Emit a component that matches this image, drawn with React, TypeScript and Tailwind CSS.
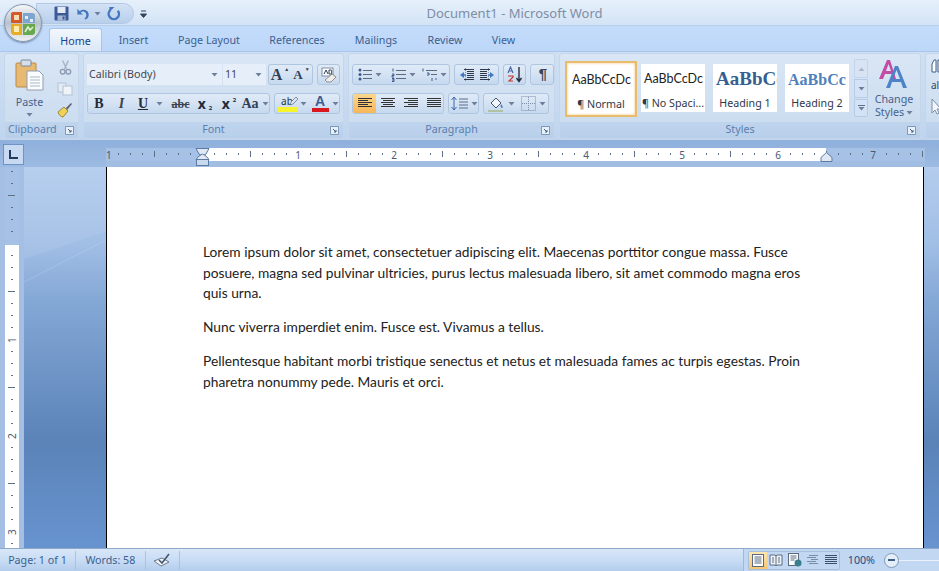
import type { ReactNode } from "react";

const UI = "font-['Noto_Sans','Open_Sans',sans-serif]";

function Caret({ className = "" }: { className?: string }) {
  return (
    <svg width="7" height="4" viewBox="0 0 7 4" className={`shrink-0 ${className}`}>
      <path d="M0.5 0h6L3.5 3.5z" fill="#6d7f9b" />
    </svg>
  );
}

function OfficeButton() {
  return (
    <div className="absolute left-[4px] top-[4px] z-20 h-[38px] w-[38px] rounded-full border border-[#8397b0] bg-gradient-to-b from-[#f7f8f8] via-[#b9c3ce] to-[#eef1f4] shadow-[0_1px_2px_rgba(60,80,110,0.6)]">
      <svg width="36" height="36" viewBox="0 0 36 36">
        <path d="M6 9q0-2 2-2h9v11H6z" fill="#d6592a" />
        <rect x="9" y="10" width="5" height="5" fill="#f7dcb4" />
        <path d="M18 8h9q3 0 3 2v8H18z" fill="#7da6cf" />
        <rect x="20" y="11" width="3" height="3" fill="#e3edf6" />
        <rect x="25" y="14" width="3" height="3" fill="#e3edf6" />
        <path d="M6 19h11v11H9q-3 0-3-3z" fill="#e7ad24" />
        <rect x="9" y="21" width="5" height="6" fill="#fbeeae" />
        <path d="M18 19h12v8q0 3-3 3h-9z" fill="#67a851" />
        <path d="M20 27l3-5 2 3 3-3" stroke="#e4f2d6" strokeWidth="1.5" fill="none" />
      </svg>
    </div>
  );
}

function QuickAccess() {
  return (
    <div className="absolute left-[36px] top-[3px] z-10 flex h-[21px] w-[98px] items-center rounded-r-full border border-[#b3c9e3] bg-gradient-to-b from-[#d3e2f5] to-[#b8cfec] pl-[17px]">
      <svg width="15" height="15" viewBox="0 0 15 15">
        <rect x="0.500" y="0.500" width="14" height="14" rx="1" fill="#3c5a9a" />
        <rect x="3.500" y="1" width="8" height="6" fill="#e4ebf6" />
        <rect x="3.500" y="9.500" width="8" height="5" fill="#a8b7d2" />
        <rect x="8.500" y="10.500" width="2" height="3" fill="#3c5a9a" />
      </svg>
      <svg width="14" height="14" viewBox="0 0 15 15" className="ml-[7px]">
        <path d="M1.500 2v6h6L5 5.800C7 4 10.500 4.500 11 8c.3 2-.8 3.600-2.200 4.600l1.600.9C13 12 14.200 9.500 13.400 6.600 12.300 2.800 7.500 1.600 4 4.500z" fill="#4478bd" />
      </svg>
      <Caret className="ml-[4px]" />
      <svg width="15" height="15" viewBox="0 0 16 16" className="ml-[6px]">
        <path d="M3.500 4.500a5.500 5.500 0 1 0 8 .5" fill="none" stroke="#4478bd" strokeWidth="2.600" />
        <path d="M8 1h-5.500v5.500z" fill="#4478bd" />
      </svg>
      <svg width="7" height="8" viewBox="0 0 7 8" className="absolute left-[103px]">
        <path d="M1 1h5M0.500 4h6L3.500 7.500z" stroke="#33465f" strokeWidth="1" fill="#33465f" />
      </svg>
    </div>
  );
}

function Tab({ label, active, w }: { label: string; active?: boolean; w: number }) {
  return (
    <div
      className={`flex h-[23px] items-center justify-center pt-[2px] text-[10.7px] ${
        active
          ? "rounded-t-[3px] border border-b-0 border-[#a9c5e8] bg-gradient-to-b from-[#f2f7fd] to-[#dbe8f7] text-[#15428b]"
          : "text-[#3c5f90]"
      }`}
      style={{ width: w }}
    >
      {label}
    </div>
  );
}

function Group({ label, width, children, launcher = true, labelClass = "justify-center" }: { label: string; width: number; children: ReactNode; launcher?: boolean; labelClass?: string }) {
  return (
    <div
      className="flex h-[86px] shrink-0 flex-col overflow-hidden rounded-[3px] border border-[#c5d6ea] bg-gradient-to-b from-[#d9e6f5] to-[#c9dbef]"
      style={{ width }}
    >
      <div className="h-[68px] shrink-0">{children}</div>
      <div className={`relative flex h-[16px] shrink-0 items-center bg-gradient-to-b from-[#bfd4ed] to-[#b8cfeb] pb-[2px] text-[10.7px] leading-none text-[#5a7fae] ${labelClass}`}>
        {label}
        {launcher && (
          <svg width="9" height="9" viewBox="0 0 9 9" className="absolute right-[4px] top-[4px]">
            <path d="M0.500 8.500v-8h8v8z" fill="#e7eff9" stroke="#7e98b9" />
            <path d="M3 3l3 3M6 4v2H4" stroke="#3f5f86" fill="none" />
          </svg>
        )}
      </div>
    </div>
  );
}

function BtnGroup({ width, children, className = "" }: { width: number; children: ReactNode; className?: string }) {
  return (
    <div
      className={`flex h-[21px] shrink-0 items-center overflow-hidden rounded-[3px] border border-[#afc5e0] bg-gradient-to-b from-[#e0ebf7] via-[#d4e2f3] to-[#c6d9ef] ${className}`}
      style={{ width }}
    >
      {children}
    </div>
  );
}

function Cell({ w, children, className = "" }: { w: number; children?: ReactNode; className?: string }) {
  return (
    <div className={`flex h-full shrink-0 items-center justify-center gap-[3px] ${className}`} style={{ width: w }}>
      {children}
    </div>
  );
}

function Lines({ rows, color = "#39506f" }: { rows: [number, number][]; color?: string }) {
  return (
    <svg width="14" height="13" viewBox="0 0 14 13">
      {rows.map(([x, w], i) => (
        <rect key={i} x={x} y={1 + i * 2} width={w} height="1" fill={color} />
      ))}
    </svg>
  );
}

function BulletsIcon() {
  return (
    <svg width="14" height="13" viewBox="0 0 14 13">
      <circle cx="2" cy="2" r="1.500" fill="#3c5a8c" />
      <circle cx="2" cy="6.500" r="1.500" fill="#3c5a8c" />
      <circle cx="2" cy="11" r="1.500" fill="#3c5a8c" />
      <path d="M5 2.500h9M5 6.500h9M5 10.500h9" stroke="#5b6a80" />
    </svg>
  );
}

function NumberingIcon() {
  return (
    <svg width="15" height="14" viewBox="0 0 15 14">
      <path d="M2 0.500v3M1 6h2v1.500H1V9h2M1 10.500h2v3H1M1 12h2" stroke="#3c5a8c" fill="none" />
      <path d="M5 2.500h10M5 6.500h10M5 10.500h10" stroke="#5b6a80" />
    </svg>
  );
}

function MultilevelIcon() {
  return (
    <svg width="15" height="14" viewBox="0 0 15 14">
      <path d="M1 0.500v3M5 5h2v2H5M10 10v3" stroke="#3c5a8c" fill="none" />
      <path d="M4 2.500h11M9 6.500h6M13 11h2" stroke="#5b6a80" />
    </svg>
  );
}

function IndentIcon({ flip }: { flip?: boolean }) {
  return (
    <svg width="16" height="14" viewBox="0 0 16 14" className={flip ? "-scale-x-100" : ""}>
      <path d="M2 7l4-3v6z" fill="#3d79c2" />
      <path d="M5 7h3" stroke="#3d79c2" strokeWidth="1.500" />
      <path d="M6 1.500h10M9 3.500h7M9 5.500h7M9 7.500h7M9 9.500h7M6 11.500h10" stroke="#2f3a4a" />
      <path d="M7.500 0v14" stroke="#8090a8" strokeDasharray="1 1" />
    </svg>
  );
}

function ClipboardGroup() {
  return (
    <div className="flex h-full">
      <div className="flex w-[47px] flex-col items-center pl-[2px] pt-[5px] text-[10.7px] leading-none text-[#45628c]">
        <svg width="30" height="32" viewBox="0 0 30 32">
          <rect x="1" y="4" width="20" height="24" rx="1" fill="#e8b971" stroke="#b98a4b" />
          <rect x="6" y="1" width="10" height="6" rx="1" fill="#d5dee9" stroke="#7f8a98" />
          <path d="M12 12h12l4 4v15H12z" fill="#fbfcfe" stroke="#8f9db0" />
          <path d="M15 18h10M15 21h10M15 24h10M15 27h10" stroke="#a9b7c9" />
        </svg>
        <span className="mt-[6px]">Paste</span>
        <Caret className="mt-[5px]" />
      </div>
      <div className="flex flex-1 flex-col items-center gap-[6px] pt-[5px]">
        <svg width="15" height="17" viewBox="0 0 16 17">
          <path d="M5 1l4 9M11 1L7 10" stroke="#a8b5c8" strokeWidth="1.500" />
          <circle cx="5" cy="13" r="2.500" fill="none" stroke="#8b9cb4" strokeWidth="1.500" />
          <circle cx="11" cy="13" r="2.500" fill="none" stroke="#8b9cb4" strokeWidth="1.500" />
        </svg>
        <svg width="16" height="14" viewBox="0 0 16 14">
          <rect x="1" y="1" width="8" height="9" fill="#e3ebf5" stroke="#b4c1d2" />
          <rect x="6" y="4" width="9" height="9" fill="#eef3f8" stroke="#b4c1d2" />
        </svg>
        <svg width="16" height="16" viewBox="0 0 16 16">
          <path d="M1 10l6-5 4 4-5 6c-2 0-4-2-5-5z" fill="#f0d25a" stroke="#9d8a35" />
          <path d="M9 6l5-5 1 1-5 6z" fill="#5b5f6b" />
        </svg>
      </div>
    </div>
  );
}

function FontGroup() {
  return (
    <div className="flex flex-col gap-[8px] pl-[3px] pt-[10px]">
      <div className="flex">
        <div className="flex h-[21px] w-[135px] items-center justify-between bg-[#e6eff9] pl-[2px] pr-[4px] text-[10.7px] text-[#3f4754]">
          Calibri (Body)
          <Caret />
        </div>
        <div className="ml-px flex h-[21px] w-[43px] items-center justify-between bg-[#e6eff9] pl-[2px] pr-[4px] text-[10.7px] text-[#3f4754]">
          11
          <Caret />
        </div>
        <BtnGroup width={45} className="ml-[2px]">
          <Cell w={22} className="gap-0 font-['Liberation_Serif',serif] text-[16px] font-bold text-[#2f4057]">A<span className="-ml-px -mt-[9px] text-[5px]">▲</span></Cell>
          <Cell w={21} className="gap-0 font-['Liberation_Serif',serif] text-[13px] font-bold text-[#2f4057]">A<span className="-ml-px -mt-[9px] text-[5px]">▼</span></Cell>
        </BtnGroup>
        <BtnGroup width={23} className="ml-[4px]">
          <Cell w={23}>
            <svg width="17" height="16" viewBox="0 0 17 16">
              <rect x="1" y="1" width="11" height="8" fill="#fff" stroke="#7c8da5" />
              <path d="M4 13l7-6 4 3-5 5H6z" fill="#f1ece4" stroke="#8a8f99" />
              <path d="M3 7l2-4 2 4M8 3h2c1 0 1 2 0 2 1 0 1 2 0 2H8z" fill="none" stroke="#2d3e57" />
            </svg>
          </Cell>
        </BtnGroup>
      </div>
      <div className="flex">
        <BtnGroup width={183}>
          <Cell w={22} className="font-['Liberation_Serif',serif] text-[14px] font-bold text-[#252b36]">B</Cell>
          <Cell w={23} className="font-['Liberation_Serif',serif] text-[14px] font-bold italic text-[#3b4350]">I</Cell>
          <Cell w={35} className="font-['Liberation_Serif',serif] text-[14px] font-bold text-[#252b36] underline">U<Caret className="ml-[5px]" /></Cell>
          <Cell w={25} className="font-['Liberation_Serif',serif] text-[12px] font-bold text-[#3b4350] line-through">abc</Cell>
          <Cell w={24} className="gap-0 text-[14px] font-bold text-[#252b36]">x<span className="mt-[9px] text-[6px]">2</span></Cell>
          <Cell w={24} className="gap-0 text-[14px] font-bold text-[#252b36]">x<span className="-mt-[7px] text-[6px]">2</span></Cell>
          <Cell w={28} className="gap-[1px] font-['Liberation_Serif',serif] text-[14px] font-bold text-[#2f4057]">Aa<Caret /></Cell>
        </BtnGroup>
        <BtnGroup width={66} className="ml-[4px]">
          <Cell w={34}>
            <div className="relative flex h-full flex-col items-center justify-center">
              <span className="h-[11px] text-[10px] leading-[10px] text-[#253448]">ab</span>
              <span className="h-[5px] w-[19px] bg-[#f7f32c]" />
              <svg width="9" height="9" viewBox="0 0 9 9" className="absolute right-[-2px] top-[3px]">
                <path d="M0 8l1-3 5-5 2 2-5 5z" fill="#dbe3ee" stroke="#5f6f88" strokeWidth="0.700" />
              </svg>
            </div>
            <Caret />
          </Cell>
          <Cell w={32}>
            <div className="flex h-full flex-col items-center justify-center">
              <span className="h-[13px] font-['Liberation_Sans',sans-serif] text-[14px] font-bold leading-[13px] text-[#3c5f90]">A</span>
              <span className="h-[4px] w-[17px] bg-[#d9171e]" />
            </div>
            <Caret />
          </Cell>
        </BtnGroup>
      </div>
    </div>
  );
}

function ParagraphGroup() {
  return (
    <div className="flex flex-col gap-[8px] pl-[3px] pt-[10px]">
      <div className="flex">
        <BtnGroup width={98}>
          <Cell w={34}><BulletsIcon /><Caret /></Cell>
          <Cell w={33}><NumberingIcon /><Caret /></Cell>
          <Cell w={29} className="gap-[1px]"><MultilevelIcon /><Caret /></Cell>
        </BtnGroup>
        <BtnGroup width={45} className="ml-[4px]">
          <Cell w={22}><IndentIcon /></Cell>
          <Cell w={22}><IndentIcon flip /></Cell>
        </BtnGroup>
        <BtnGroup width={23} className="ml-[4px]">
          <Cell w={23}>
            <svg width="17" height="17" viewBox="0 0 17 17">
              <path d="M1 7l2.500-6L6 7M2 5h3" fill="none" stroke="#4a69a8" strokeWidth="1.200" />
              <path d="M1 10h5v1l-4 4h4" fill="none" stroke="#c0392b" strokeWidth="1.200" />
              <path d="M12 1v14M9.500 12l2.500 3.500 2.500-3.500" fill="none" stroke="#24303f" strokeWidth="1.400" />
            </svg>
          </Cell>
        </BtnGroup>
        <BtnGroup width={24} className="ml-[4px]">
          <Cell w={24} className="font-['Liberation_Sans',sans-serif] text-[15px] font-bold text-[#3a4453]">¶</Cell>
        </BtnGroup>
      </div>
      <div className="flex">
        <BtnGroup width={92}>
          <Cell w={23} className="bg-gradient-to-b from-[#fbd78c] to-[#f7b65a]"><Lines rows={[[0, 14], [0, 10], [0, 14], [0, 10], [0, 14]]} color="#333" /></Cell>
          <Cell w={23}><Lines rows={[[0, 14], [2, 10], [0, 14], [2, 10], [0, 14]]} color="#333" /></Cell>
          <Cell w={23}><Lines rows={[[0, 14], [4, 10], [0, 14], [4, 10], [0, 14]]} color="#333" /></Cell>
          <Cell w={23}><Lines rows={[[0, 14], [0, 14], [0, 14], [0, 14], [0, 14]]} color="#333" /></Cell>
        </BtnGroup>
        <BtnGroup width={31} className="ml-[4px]">
          <Cell w={31}>
            <svg width="17" height="15" viewBox="0 0 17 15">
              <path d="M3 1v13M0.500 4L3 1l2.500 3M0.500 11L3 14l2.500-3" fill="none" stroke="#3a68ad" />
              <path d="M8 3h9M8 6h9M8 9h9M8 12h9" stroke="#5c6f8d" />
            </svg>
            <Caret />
          </Cell>
        </BtnGroup>
        <BtnGroup width={66} className="ml-[4px]">
          <Cell w={33}>
            <svg width="18" height="16" viewBox="0 0 18 16">
              <path d="M4 7l5-5 5 5-5 5z" fill="#f2f5f9" stroke="#47566d" />
              <path d="M14 8c2 2 2 4 1 4s-2-2-1-4z" fill="#3e79bd" />
              <rect x="1" y="14" width="15" height="2" fill="#b2c1a0" />
            </svg>
            <Caret />
          </Cell>
          <Cell w={33}>
            <svg width="15" height="15" viewBox="0 0 15 15">
              <rect x="0.500" y="0.500" width="14" height="14" fill="none" stroke="#7f90a8" strokeDasharray="1 1" />
              <path d="M7.500 1v13M1 7.500h13" stroke="#7f90a8" strokeDasharray="1 1" />
            </svg>
            <Caret />
          </Cell>
        </BtnGroup>
      </div>
    </div>
  );
}

function StyleCard({ sample, label, sampleClass, width = 64 }: { sample: string; label: string; sampleClass: string; width?: number }) {
  return (
    <div className="flex h-[48px] shrink-0 flex-col items-center overflow-hidden bg-white" style={{ width }}>
      <div className={`flex h-[31px] w-full items-center justify-start overflow-hidden whitespace-nowrap pl-[3px] ${sampleClass}`}>{sample}</div>
      <div className="whitespace-nowrap pt-px text-[10.7px] leading-[14px] text-[#30384a]">{label}</div>
    </div>
  );
}

function StylesGroup() {
  return (
    <div className="flex h-full">
      <div className="flex w-[294px] items-start gap-[8px] pl-[5px] pt-[7px]">
        <div className="shrink-0 border-[2px] border-[#e9bb6c] bg-white p-[2px] shadow-[inset_0_0_3px_#f3c97a]">
          <StyleCard width={64} sample="AaBbCcDc" label="¶ Normal" sampleClass="font-['Lato',sans-serif] text-[12.5px] text-[#222]" />
        </div>
        <div className="-ml-[4px] pt-[3px]">
          <StyleCard sample="AaBbCcDc" label="¶ No Spaci..." sampleClass="font-['Lato',sans-serif] text-[12.5px] text-[#222]" />
        </div>
        <div className="pt-[3px]">
          <StyleCard sample="AaBbCc" label="Heading 1" sampleClass="font-['Liberation_Serif',serif] text-[19px] font-bold text-[#365f91]" />
        </div>
        <div className="pt-[3px]">
          <StyleCard sample="AaBbCc" label="Heading 2" sampleClass="font-['Liberation_Serif',serif] text-[16px] font-bold text-[#4f81bd]" />
        </div>
      </div>
      <div className="mt-[5px] flex h-[58px] w-[14px] shrink-0 flex-col gap-[1px]">
        <div className="flex h-[19px] items-center justify-center rounded-t-[2px] border border-[#c3d5ea] bg-[#d8e4f3]"><svg width="7" height="4" viewBox="0 0 7 4"><path d="M0.500 4h6L3.500 0.500z" fill="#a9b9ce" /></svg></div>
        <div className="flex h-[19px] items-center justify-center border border-[#b6cbe6] bg-[#d3e2f5]"><Caret /></div>
        <div className="flex h-[18px] flex-col items-center justify-center gap-[1px] rounded-b-[2px] border border-[#b6cbe6] bg-[#d3e2f5]"><span className="h-px w-[7px] bg-[#5c6f8d]" /><Caret /></div>
      </div>
      <div className="flex flex-1 flex-col items-center pt-[5px] text-center text-[10.7px] leading-[13px] text-[#45628c]">
        <svg width="32" height="31" viewBox="0 0 32 31">
          <path d="M1 20L9 1h3l6 19h-3l-1.500-5H7l-2 5zM8 12h5L10.500 5z" fill="#c24ca4" fillRule="evenodd" />
          <path d="M8 29L17 7h3l9 22h-4l-2-6h-9l-2 6zM15 20h7l-3.500-9z" fill="#4d83c7" fillRule="evenodd" />
        </svg>
        <span className="mt-[3px]">Change</span>
        <span className="flex items-center gap-[2px]">Styles<Caret /></span>
      </div>
    </div>
  );
}

function HorizontalRuler() {
  const marks = [];
  for (let x = 106; x < 925; x += 12) {
    if ((x - 202) % 96 === 0) continue;
    const big = (x - 202) % 48 === 0;
    marks.push(<rect key={x} x={x - 106} y={big ? 3 : 5} width="1" height={big ? 6 : 2} fill="#5f6f86" />);
  }
  const nums = [[0, "1"], [298, "1"], [394, "2"], [490, "3"], [586, "4"], [682, "5"], [778, "6"], [873, "7"]] as [number, string][];
  return (
    <svg width="819" height="19" viewBox="0 0 819 19" className="shrink-0">
      <rect width="819" height="13" fill="#a6c1e6" />
      <rect x="97" width="623" height="13" fill="#fff" />
      <rect y="13" width="819" height="6" fill="#a2bde2" />
      {marks}
      {nums.map(([x, n], i) => (
        <text key={i} x={i === 0 ? 0 : x - 106} y="10.500" textAnchor={i === 0 ? "start" : "middle"} fontFamily="Noto Sans" fontSize="10" fill="#4a5a72">{n}</text>
      ))}
      <path d="M90 0.500h13l-3 5.500-3.500 2-3.500-2z" fill="#dfe8f4" stroke="#5c7ba3" />
      <path d="M93 8l3.500-2 3.500 2 3 3.500H90z" fill="#dfe8f4" stroke="#5c7ba3" />
      <rect x="90.500" y="11.500" width="12" height="6" fill="#c9d9ed" stroke="#5c7ba3" />
      <path d="M715 13.500v-4l5.500-5 5.500 5v4z" fill="#dfe8f4" stroke="#5c7ba3" />
    </svg>
  );
}

function VerticalRuler() {
  const marks = [];
  for (let y = 0; y < 381; y += 12) {
    if ((y - 72) % 96 === 0) continue;
    const big = (y - 24) % 96 === 0;
    marks.push(<rect key={y} x={big ? 3 : 6} y={y + 4} width={big ? 7 : 2} height="1" fill="#5f6f86" />);
  }
  return (
    <svg width="14" height="381" viewBox="0 0 14 381">
      <rect width="14" height="78" fill="#a6c1e6" />
      <rect y="78" width="14" height="303" fill="#fff" />
      {marks}
      {[[173, "1"], [269, "2"], [365, "3"]].map(([y, n]) => (
        <text key={n as string} x="7" y={y as number} dy="3.500" textAnchor="middle" fontFamily="Noto Sans" fontSize="10" fill="#4a5a72" transform={`rotate(-90 7 ${y})`}>{n}</text>
      ))}
    </svg>
  );
}

function StatusItem({ children, w }: { children: ReactNode; w: number }) {
  return (
    <div className="flex h-[19px] items-center justify-center border-r border-[#a9c2e0] text-[10.7px] text-[#3e5f8e]" style={{ width: w }}>
      {children}
    </div>
  );
}

export default function App() {
  return (
    <div className={`flex h-[571px] w-[939px] flex-col overflow-hidden bg-[#bfdbff] ${UI}`}>
      <OfficeButton />
      <QuickAccess />

      {/* Title bar */}
      <div className="flex h-[26px] shrink-0 items-center justify-center border-b border-[#b7cfea] bg-gradient-to-b from-[#e6f0fb] to-[#d3e3f6] pl-[90px] pt-[3px] text-[13px] text-[#7f8ea3]">
        Document1 - Microsoft Word
      </div>

      {/* Tabs */}
      <div className="flex h-[26px] shrink-0 items-end border-b border-[#a9c5e8] bg-gradient-to-b from-[#c4dcfb] to-[#bdd7f9] pl-[49px]">
        <Tab label="Home" active w={53} />
        <Tab label="Insert" w={63} />
        <Tab label="Page Layout" w={88} />
        <Tab label="References" w={88} />
        <Tab label="Mailings" w={70} />
        <Tab label="Review" w={68} />
        <Tab label="View" w={49} />
      </div>

      {/* Ribbon */}
      <div className="flex h-[89px] shrink-0 gap-[4px] border-b border-[#94b2d8] bg-gradient-to-b from-[#cfe0f4] to-[#bfd5ef] pl-[4px] pt-[1px]">
        <Group label="Clipboard" width={75} labelClass="justify-start pl-[3px]"><ClipboardGroup /></Group>
        <Group label="Font" width={261}><FontGroup /></Group>
        <Group label="Paragraph" width={207}><ParagraphGroup /></Group>
        <Group label="Styles" width={362}><StylesGroup /></Group>
        <Group label="" width={40} launcher={false}>
          <div className="flex flex-col items-start pl-[5px] pt-[5px]">
            <svg width="10" height="14" viewBox="0 0 10 14">
              <path d="M1 13V5l2-4h2v12zM7 1h2v12H7z" fill="#fff" stroke="#3f5f86" />
            </svg>
            <span className="mt-[7px] text-[10px] leading-[10px] text-[#33465f]">al</span>
            <svg width="10" height="16" viewBox="0 0 10 16" className="mt-[9px]">
              <path d="M1 0v14l3-3 2 4 2-1-2-4h4z" fill="#f3f6fa" stroke="#7d8ea6" />
            </svg>
          </div>
        </Group>
      </div>

      {/* Ruler row */}
      <div className="flex h-[26px] shrink-0 bg-gradient-to-b from-[#8fb0dc] to-[#9dbbe2]">
        <div className="ml-[3px] mt-[3px] flex h-[21px] w-[21px] items-center justify-center border border-[#6f93c4] bg-[#c8daf2]">
          <span className="h-[9px] w-[9px] border-b-[2px] border-l-[2px] border-[#233a5c]" />
        </div>
        <div className="ml-[82px] mt-[7px]"><HorizontalRuler /></div>
      </div>

      {/* Document area */}
      <div className="flex min-h-0 flex-1">
        <div className="flex w-[24px] shrink-0 bg-[#a5bfe4] pl-[5px]">
          <VerticalRuler />
        </div>
        <div className="relative w-[82px] shrink-0 overflow-hidden bg-[linear-gradient(to_bottom,#b4cdee_0%,#a1bee5_20%,#84a8d6_35%,#5b83b8_72%,#6793cf_100%)]">
          <svg width="82" height="120" viewBox="0 0 82 120" className="absolute left-0 top-0">
            <path d="M0 92L82 65V0H0z" fill="#c3d8f2" opacity="0.200" />
            <path d="M0 115L82 73" stroke="#c5d8f0" strokeWidth="1" opacity="0.350" fill="none" />
          </svg>
        </div>
        <main className="w-[818px] shrink-0 border-x border-black bg-white pl-[96px] pr-[108px] pt-[75px] font-['Lato',sans-serif] text-[13.75px] leading-[20.5px] text-[#222]">
          <p className="mb-[13.5px]">
            Lorem ipsum dolor sit amet, consectetuer adipiscing elit. Maecenas porttitor congue massa. Fusce posuere, magna sed pulvinar ultricies, purus lectus malesuada libero, sit amet commodo magna eros quis urna.
          </p>
          <p className="mb-[13.5px]">Nunc viverra imperdiet enim. Fusce est. Vivamus a tellus.</p>
          <p>
            Pellentesque habitant morbi tristique senectus et netus et malesuada fames ac turpis egestas. Proin pharetra nonummy pede. Mauris et orci.
          </p>
        </main>
        <div className="flex-1 bg-[linear-gradient(to_bottom,#b4cdee_0%,#a1bee5_20%,#84a8d6_35%,#5b83b8_72%,#6793cf_100%)]" />
      </div>

      {/* Status bar */}
      <div className="flex h-[23px] shrink-0 items-center border-t border-[#8ea9c9] bg-gradient-to-b from-[#d9e7f8] via-[#c8dcf5] to-[#b4cdec]">
        <StatusItem w={76}>Page: 1 of 1</StatusItem>
        <StatusItem w={70}>Words: 58</StatusItem>
        <StatusItem w={34}>
          <svg width="18" height="15" viewBox="0 0 18 15">
            <path d="M1 8l7 5 8-4-7-4z" fill="#f3f6fa" stroke="#68788f" />
            <path d="M6 7l3 3 7-9" fill="none" stroke="#45566f" strokeWidth="1.600" />
          </svg>
        </StatusItem>
        <div className="ml-[563px] flex h-[22px] items-center border-l border-[#9fb8d8] bg-[#c2d7f1] pl-[4px]">
          <div className="flex h-[19px] w-[92px] items-center overflow-hidden rounded-[2px] border border-[#a8bfdc]">
            <Cell w={18} className="bg-gradient-to-b from-[#fde7b0] to-[#f8c56e]">
              <svg width="12" height="13" viewBox="0 0 12 13">
                <rect x="0.500" y="0.500" width="11" height="12" fill="#fff" stroke="#5b6a80" />
                <path d="M2.500 3h7M2.500 5h7M2.500 7h7M2.500 9h7" stroke="#5b6a80" />
              </svg>
            </Cell>
            <Cell w={19}>
              <svg width="14" height="13" viewBox="0 0 14 13">
                <path d="M1 1h5l1 1 1-1h5v10H8l-1 1-1-1H1z" fill="#eef3f9" stroke="#5b6a80" />
                <path d="M7 2v9M3 4h2M3 6h2M3 8h2M9 4h2M9 6h2M9 8h2" stroke="#5b6a80" />
              </svg>
            </Cell>
            <Cell w={18}>
              <svg width="14" height="14" viewBox="0 0 14 14">
                <rect x="0.500" y="0.500" width="10" height="12" fill="#fff" stroke="#5b6a80" />
                <path d="M2.500 3h6M2.500 5h6M2.500 7h4" stroke="#5b6a80" />
                <circle cx="10" cy="10" r="3.500" fill="#3a7f8f" />
              </svg>
            </Cell>
            <Cell w={18}><Lines rows={[[3, 9], [1, 9], [5, 7], [1, 9], [3, 9]]} color="#7b8ca5" /></Cell>
            <Cell w={18}><Lines rows={[[1, 12], [1, 12], [1, 12], [1, 12], [1, 12]]} /></Cell>
          </div>
          <span className="ml-[8px] text-[10.7px] text-[#1f4a86]">100%</span>
          <span className="ml-[9px] flex h-[15px] w-[15px] items-center justify-center rounded-full border border-[#7e98b9] bg-[#e4edf8]">
            <span className="h-[2px] w-[7px] bg-[#3f5f86]" />
          </span>
          <span className="h-px w-[40px] bg-[#eaf1fa]" />
        </div>
      </div>
    </div>
  );
}
